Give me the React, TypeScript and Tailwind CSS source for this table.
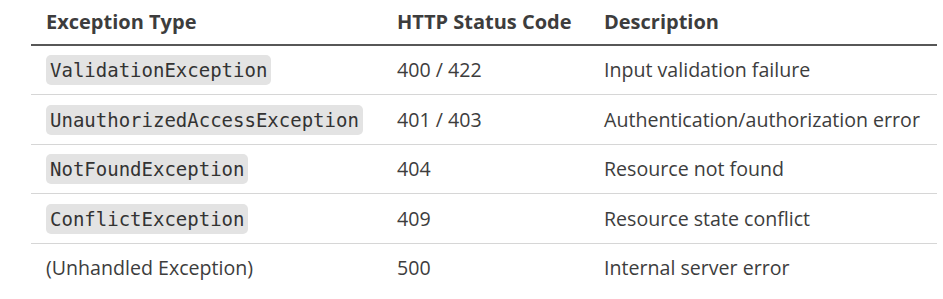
import React from 'react';

interface Row {
    type: string;
    code: boolean;
    status: string;
    description: string;
}

const rows: Row[] = [
    { type: 'ValidationException', code: true, status: '400 / 422', description: 'Input validation failure' },
    { type: 'UnauthorizedAccessException', code: true, status: '401 / 403', description: 'Authentication/authorization error' },
    { type: 'NotFoundException', code: true, status: '404', description: 'Resource not found' },
    { type: 'ConflictException', code: true, status: '409', description: 'Resource state conflict' },
    { type: '(Unhandled Exception)', code: false, status: '500', description: 'Internal server error' },
];

export default function App() {
    return (
        <div className="h-[299px] w-[943px] bg-white pl-[31px] text-[#3d3d3d] font-['Open_Sans',sans-serif]">
            <table className="border-collapse table-fixed w-[906px] text-[19.6px]">
                <colgroup>
                    <col className="w-[351px]" />
                    <col className="w-[207px]" />
                    <col className="w-[348px]" />
                </colgroup>
                <thead>
                    <tr className="h-[45px] border-b-2 border-[#575757] text-[20px]">
                        <th className="px-[15px] text-left font-bold whitespace-nowrap">Exception Type</th>
                        <th className="px-[15px] text-left font-bold whitespace-nowrap">HTTP Status Code</th>
                        <th className="px-[15px] text-left font-bold whitespace-nowrap">Description</th>
                    </tr>
                </thead>
                <tbody>
                    {rows.map((row, i) => (
                        <tr
                            key={row.type}
                            className={i < rows.length - 1 ? 'h-[49.5px] border-b border-[#d6d6d6]' : 'h-[49.5px]'}
                        >
                            <td className="px-[15px] whitespace-nowrap">
                                {row.code ? (
                                    <code className="rounded-[5px] bg-[#e3e3e3] px-[4px] py-[4px] text-[19px] font-['DejaVu_Sans_Mono',monospace] text-[#333]">
                                        {row.type}
                                    </code>
                                ) : (
                                    row.type
                                )}
                            </td>
                            <td className="px-[15px] whitespace-nowrap">{row.status}</td>
                            <td className="px-[15px] whitespace-nowrap">{row.description}</td>
                        </tr>
                    ))}
                </tbody>
            </table>
        </div>
    );
}
